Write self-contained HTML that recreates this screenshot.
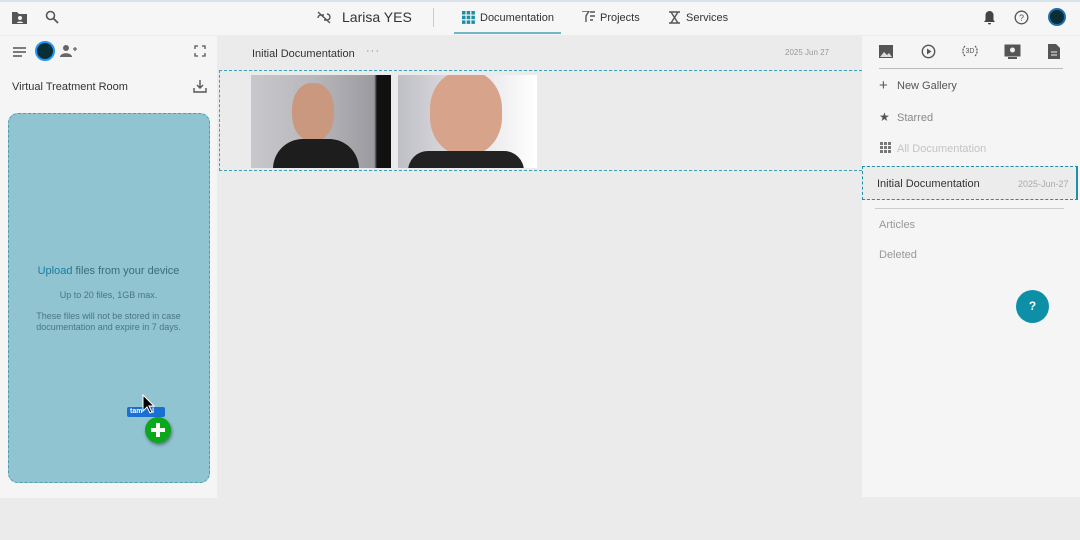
<!DOCTYPE html>
<html><head><style>
*{margin:0;padding:0;box-sizing:border-box}
body{width:1080px;height:540px;background:#ebebeb;font-family:"Liberation Sans",sans-serif;position:relative;overflow:hidden;color:#333}
.a{position:absolute}
.top{left:0;top:0;width:1080px;height:35px;background:#f6f6f6;border-top:2px solid #dbe3ea}
.t{font-size:11px;white-space:nowrap}
</style></head><body>
<div class="a top"></div>
<svg class="a" style="left:12px;top:11px" width="16" height="13"><path d="M0 1h5l2 2h8v10H0z" fill="#555"/><circle cx="8" cy="7" r="2" fill="#f6f6f6"/><path d="M5 12c0-2 6-2 6 0" fill="#f6f6f6"/></svg>
<svg class="a" style="left:45px;top:10px" width="14" height="14"><circle cx="5.5" cy="5.5" r="4" stroke="#555" stroke-width="1.6" fill="none"/><path d="M8.5 8.5l4.5 4.5" stroke="#555" stroke-width="1.8"/></svg>
<svg class="a" style="left:316px;top:11px" width="16" height="13"><path d="M2 7a3 3 0 0 1 3-3h3M8 9h3a3 3 0 0 0 0-6M2 1l12 11" stroke="#555" stroke-width="1.4" fill="none"/></svg>
<div class="a" style="left:342px;top:9px;font-size:14px;color:#333">Larisa YES</div>
<div class="a" style="left:433px;top:8px;width:1px;height:19px;background:#ccc"></div>
<svg class="a" style="left:462px;top:11px" width="13" height="13"><g fill="#1b8fa6"><rect x="0" y="0" width="3.5" height="3.5"/><rect x="4.7" y="0" width="3.5" height="3.5"/><rect x="9.4" y="0" width="3.5" height="3.5"/><rect x="0" y="4.7" width="3.5" height="3.5"/><rect x="4.7" y="4.7" width="3.5" height="3.5"/><rect x="9.4" y="4.7" width="3.5" height="3.5"/><rect x="0" y="9.4" width="3.5" height="3.5"/><rect x="4.7" y="9.4" width="3.5" height="3.5"/><rect x="9.4" y="9.4" width="3.5" height="3.5"/></g></svg>
<div class="a t" style="left:480px;top:12px">Documentation</div>
<div class="a" style="left:454px;top:32px;width:107px;height:2px;background:#6fb7c8"></div>
<svg class="a" style="left:582px;top:11px" width="14" height="12"><path d="M0 0h7l-3 5v6M8 1h5M8 5h5M8 9h3" stroke="#555" stroke-width="1.4" fill="none"/></svg>
<div class="a t" style="left:600px;top:12px">Projects</div>
<svg class="a" style="left:669px;top:11px" width="11" height="13"><path d="M0 1h11M0 12h11M2 1l7 11M9 1l-7 11" stroke="#555" stroke-width="1.4" fill="none"/></svg>
<div class="a t" style="left:686px;top:12px">Services</div>
<svg class="a" style="left:983px;top:10px" width="13" height="15"><path d="M6.5 1a4 4 0 0 0-4 4v5L1 12h11l-1.5-2V5a4 4 0 0 0-4-4zM5 13h3a1.5 1.5 0 0 1-3 0z" fill="#444"/></svg>
<svg class="a" style="left:1014px;top:10px" width="15" height="15"><circle cx="7.5" cy="7.5" r="6.3" stroke="#555" stroke-width="1.3" fill="none"/><text x="7.5" y="11" font-size="9" text-anchor="middle" fill="#555" font-family="Liberation Sans">?</text></svg>
<div class="a" style="left:1048px;top:8px;width:18px;height:18px;border-radius:50%;background:#0a2e36;border:2px solid #1c6fae"></div>

<div class="a" style="left:0;top:36px;width:217px;height:462px;background:#f5f5f5"></div>
<svg class="a" style="left:13px;top:47px" width="14" height="10"><path d="M0 1h13M0 5h13M0 9h9" stroke="#555" stroke-width="1.5"/></svg>
<div class="a" style="left:35px;top:41px;width:20px;height:20px;border-radius:50%;background:#0a2e36;border:2px solid #2196f3"></div>
<svg class="a" style="left:60px;top:44px" width="18" height="14"><circle cx="6" cy="4" r="3" fill="#666"/><path d="M0 13c0-5 12-5 12 0z" fill="#666"/><path d="M13 5h4M15 3v4" stroke="#666" stroke-width="1.3"/></svg>
<svg class="a" style="left:194px;top:45px" width="12" height="12"><path d="M1 4V1h3M8 1h3v3M11 8v3H8M4 11H1V8" stroke="#555" stroke-width="1.3" fill="none"/></svg>
<div class="a t" style="left:12px;top:81px;color:#333">Virtual Treatment Room</div>
<svg class="a" style="left:193px;top:79px" width="14" height="14"><path d="M7 1v8M4 6l3 3 3-3M1 9v4h12V9" stroke="#555" stroke-width="1.4" fill="none"/></svg>
<div class="a" style="left:8px;top:113px;width:202px;height:370px;background:#8fc4d0;border:1px dashed #4e9eb0;border-radius:10px"></div>
<div class="a t" style="left:0;width:217px;text-align:center;top:265px;color:#3b6d7a"><span style="color:#1a7ea0">Upload</span> files from your device</div>
<div class="a" style="left:0;width:217px;text-align:center;top:290px;font-size:9px;color:#4a7680">Up to 20 files, 1GB max.</div>
<div class="a" style="left:0;width:217px;text-align:center;top:311px;font-size:9px;line-height:11px;color:#4a7680">These files will not be stored in case<br>documentation and expire in 7 days.</div>
<div class="a" style="left:127px;top:407px;width:38px;height:10px;background:#1a6fd0;border-radius:2px;color:#fff;font-size:7px;font-weight:bold;padding-left:3px;line-height:10px">tam&nbsp;&nbsp;&nbsp;&nbsp;&nbsp;l</div>
<svg class="a" style="left:142px;top:394px" width="14" height="20"><path d="M1 1v16l4-4 3 6 2-1-3-6h5z" fill="#000" stroke="#fff" stroke-width="1"/></svg>
<div class="a" style="left:145px;top:417px;width:26px;height:26px;border-radius:50%;background:#0aa81a;box-shadow:1px 2px 3px rgba(0,0,0,.4)"></div>
<div class="a" style="left:151px;top:428px;width:14px;height:4px;background:#fff"></div>
<div class="a" style="left:156px;top:423px;width:4px;height:14px;background:#fff"></div>

<div class="a t" style="left:252px;top:48px;color:#333">Initial Documentation</div>
<div class="a t" style="left:366px;top:45px;color:#888;letter-spacing:1px">···</div>
<div class="a" style="left:785px;top:48px;font-size:8px;color:#999">2025 Jun 27</div>
<div class="a" style="left:219px;top:70px;width:643px;height:101px;border:1px dashed #3aa3bb;border-right:none"></div>
<div class="a" style="left:251px;top:75px;width:140px;height:93px;overflow:hidden;background:linear-gradient(90deg,#c8c8cc 0%,#b8b8bc 45%,#9a9aa0 88%,#111 90%,#111 100%)">
<div class="a" style="left:41px;top:8px;width:42px;height:58px;border-radius:45%;background:#c9987e"></div>
<div class="a" style="left:22px;top:64px;width:86px;height:30px;border-radius:30px 30px 0 0;background:#1d1d1d"></div></div>
<div class="a" style="left:398px;top:75px;width:139px;height:93px;overflow:hidden;background:linear-gradient(90deg,#bfbfc6,#e7e7ea 60%,#fff)">
<div class="a" style="left:32px;top:-4px;width:72px;height:84px;border-radius:45%;background:#d7a38a"></div>
<div class="a" style="left:10px;top:76px;width:116px;height:20px;border-radius:20px 20px 0 0;background:#222"></div></div>

<div class="a" style="left:862px;top:36px;width:218px;height:461px;background:#f5f5f5"></div>
<svg class="a" style="left:879px;top:45px" width="14" height="13"><rect width="14" height="13" fill="#555"/><path d="M1 12l4-5 3 3 2-2 3 4z" fill="#ddd"/></svg>
<svg class="a" style="left:921px;top:44px" width="15" height="15"><circle cx="7.5" cy="7.5" r="6.2" stroke="#555" stroke-width="1.4" fill="none"/><path d="M6 4.5v6l4.5-3z" fill="#555"/></svg>
<svg class="a" style="left:961px;top:42px" width="18" height="18"><path d="M4 14a7 7 0 0 1 0-10M14 4a7 7 0 0 1 0 10" stroke="#555" stroke-width="1.2" fill="none" stroke-dasharray="2 1"/><text x="9" y="11" font-size="7" text-anchor="middle" fill="#555" font-family="Liberation Sans">3D</text></svg>
<svg class="a" style="left:1004px;top:44px" width="17" height="15"><rect x="0.5" y="0.5" width="16" height="12" fill="#555"/><circle cx="8.5" cy="6" r="2.5" fill="#eee"/><path d="M4 14h9" stroke="#555" stroke-width="2"/></svg>
<svg class="a" style="left:1048px;top:44px" width="12" height="15"><path d="M0 0h8l4 4v11H0z" fill="#555"/><path d="M3 8h6M3 11h6" stroke="#eee"/></svg>
<div class="a" style="left:879px;top:68px;width:184px;height:1px;background:#bbb"></div>
<div class="a" style="left:879px;top:77px;font-size:15px;color:#555">+</div>
<div class="a t" style="left:897px;top:80px;color:#555">New Gallery</div>
<div class="a" style="left:879px;top:110px;font-size:12px;color:#555">★</div>
<div class="a t" style="left:897px;top:112px;color:#888">Starred</div>
<svg class="a" style="left:880px;top:142px" width="11" height="11"><g fill="#777"><rect width="3" height="3"/><rect x="4" width="3" height="3"/><rect x="8" width="3" height="3"/><rect y="4" width="3" height="3"/><rect x="4" y="4" width="3" height="3"/><rect x="8" y="4" width="3" height="3"/><rect y="8" width="3" height="3"/><rect x="4" y="8" width="3" height="3"/><rect x="8" y="8" width="3" height="3"/></g></svg>
<div class="a t" style="left:897px;top:143px;color:#c4c4c4">All Documentation</div>
<div class="a" style="left:862px;top:166px;width:216px;height:34px;background:#ececec;border:1px dashed #1f8ea8;border-right:2px solid #1f8ea8"></div>
<div class="a t" style="left:877px;top:178px;color:#333">Initial Documentation</div>
<div class="a" style="left:1018px;top:179px;font-size:9px;color:#aaa">2025-Jun-27</div>
<div class="a" style="left:875px;top:208px;width:189px;height:1px;background:#ccc"></div>
<div class="a t" style="left:879px;top:219px;color:#999">Articles</div>
<div class="a t" style="left:879px;top:249px;color:#999">Deleted</div>
<div class="a" style="left:1016px;top:290px;width:33px;height:33px;border-radius:50%;background:#0e8fa8;color:#fff;font-weight:bold;font-size:12px;text-align:center;line-height:33px">?</div>
</body></html>
